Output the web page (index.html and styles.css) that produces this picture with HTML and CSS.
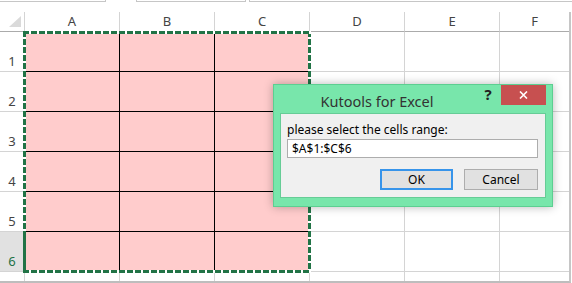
FILE: index.html
```html
<!DOCTYPE html>
<html>
<head>
<meta charset="utf-8">
<title>Kutools for Excel</title>
<link rel="stylesheet" href="styles.css">
</head>
<body>
<div class="app">
  <div class="toolbar">
    <div class="tb-box tb-name"></div>
    <div class="tb-box tb-fx"></div>
    <div class="tb-box tb-formula"></div>
  </div>
  <div class="sheet">
    <div class="corner"><span class="tri"></span></div>
    <div class="ch">A</div><div class="ch">B</div><div class="ch">C</div><div class="ch">D</div><div class="ch">E</div><div class="ch last">F</div>

    <div class="rh">1</div><div class="c sel"></div><div class="c sel"></div><div class="c sel"></div><div class="c"></div><div class="c"></div><div class="c last"></div>
    <div class="rh">2</div><div class="c sel"></div><div class="c sel"></div><div class="c sel"></div><div class="c"></div><div class="c"></div><div class="c last"></div>
    <div class="rh">3</div><div class="c sel"></div><div class="c sel"></div><div class="c sel"></div><div class="c"></div><div class="c"></div><div class="c last"></div>
    <div class="rh">4</div><div class="c sel"></div><div class="c sel"></div><div class="c sel"></div><div class="c"></div><div class="c"></div><div class="c last"></div>
    <div class="rh">5</div><div class="c sel"></div><div class="c sel"></div><div class="c sel"></div><div class="c"></div><div class="c"></div><div class="c last"></div>
    <div class="rh active">6</div><div class="c sel"></div><div class="c sel"></div><div class="c sel"></div><div class="c"></div><div class="c"></div><div class="c last"></div>
    <div class="rh end"></div><div class="c end"></div><div class="c end"></div><div class="c end"></div><div class="c end"></div><div class="c end"></div><div class="c end last"></div>
  </div>

  <div class="marquee"></div>

  <div class="dialog">
    <div class="titlebar">
      <div class="title">Kutools for Excel</div>
      <div class="help">?</div>
      <div class="close">
        <svg width="9" height="8" viewBox="0 0 9 8"><path d="M1 0.5 L8 7.5 M8 0.5 L1 7.5" stroke="#fff" stroke-width="1.6" fill="none"/></svg>
      </div>
    </div>
    <div class="client">
      <div class="label">please select the cells range:</div>
      <div class="input">$A$1:$C$6</div>
      <div class="buttons">
        <div class="btn ok">OK</div>
        <div class="btn cancel">Cancel</div>
      </div>
    </div>
  </div>
</div>
</body>
</html>
```
FILE: styles.css
```css
* { box-sizing: border-box; }
html, body { margin: 0; padding: 0; background: #fff; }
body { font-family: "Noto Sans", "Liberation Sans", sans-serif; }

.app {
  position: relative;
  width: 572px;
  height: 283px;
  overflow: hidden;
  background: #fff;
}

/* remnants of the formula bar */
.toolbar {
  height: 12px;
  display: flex;
  align-items: flex-start;
}
.tb-box {
  height: 2px;
  border-bottom: 1px solid #c6c6c6;
}
.tb-name { width: 106px; border-right: 1px solid #c6c6c6; }
.tb-fx { width: 110px; margin-left: 30px; border-left: 1px solid #c6c6c6; border-right: 1px solid #c6c6c6; }
.tb-formula { flex: 1; margin-left: 3px; border-left: 1px solid #c6c6c6; }

/* grid */
.sheet {
  width: max-content;
  display: grid;
  grid-template-columns: 25px 95px 95px 95px 95px 95px 69px;
  grid-template-rows: 20px repeat(6, 40px) 9px;
  border-right: 2px solid #c6c6c6;
  border-bottom: 2px solid #bdbdbd;
  color: #444;
  font-size: 13px;
}
.corner {
  border-right: 1px solid #d4d4d4;
  border-bottom: 1px solid #ababab;
  display: flex;
  justify-content: flex-end;
  align-items: flex-end;
  padding: 0 3px 4px 0;
}
.tri {
  width: 0;
  height: 0;
  border-left: 12px solid transparent;
  border-bottom: 11px solid #dadada;
}
.ch {
  border-right: 1px solid #d4d4d4;
  border-bottom: 1px solid #ababab;
  text-align: center;
  line-height: 19px;
}
.ch.last { border-right: none; }

.rh {
  border-right: 1px solid #d4d4d4;
  border-bottom: 1px solid #d4d4d4;
  display: flex;
  justify-content: center;
  align-items: flex-end;
  line-height: 17px;
  padding-bottom: 1px;
}
.rh.active {
  background: #e1e1e1;
  color: #217346;
}
.c {
  border-right: 1px solid #d4d4d4;
  border-bottom: 1px solid #d4d4d4;
}
.c.last { border-right: none; }
.c.sel {
  background: #ffcccc;
  border-right-color: #000;
  border-bottom-color: #000;
}
.rh.end, .c.end { border-bottom: none; }

/* copy marquee around A1:C6 */
.marquee {
  position: absolute;
  left: 23px;
  top: 31px;
  width: 288px;
  height: 242px;
  background:
    linear-gradient(#217346, #217346) left bottom / 3px 42px no-repeat,
    repeating-linear-gradient(90deg, #217346 0 6px, #fff 6px 8px) left top / 100% 3px no-repeat,
    repeating-linear-gradient(90deg, #217346 0 6px, #fff 6px 8px) left bottom / 100% 3px no-repeat,
    repeating-linear-gradient(180deg, #217346 0 6px, #fff 6px 8px) left top / 3px 100% no-repeat,
    repeating-linear-gradient(180deg, #217346 0 6px, #fff 6px 8px) right top / 3px 100% no-repeat;
}

/* dialog */
.dialog {
  position: absolute;
  left: 273px;
  top: 84px;
  width: 280px;
  height: 123px;
  background: #78e6ab;
  border: 1px solid #5ccf91;
  box-shadow: 0 0 9px rgba(0, 0, 0, 0.28);
  padding: 0 6px 8px 6px;
  display: flex;
  flex-direction: column;
}
.titlebar {
  height: 28px;
  display: flex;
  align-items: flex-start;
  margin: 0 -6px 0 -6px;
}
.title {
  flex: 1;
  text-align: center;
  font-size: 14.5px;
  line-height: 20px;
  padding-top: 6px;
  color: #333;
}
.help {
  width: 16px;
  text-align: center;
  font-size: 15px;
  font-weight: bold;
  line-height: 18px;
  color: #222;
  margin-right: 5px;
}
.close {
  width: 45px;
  height: 20px;
  background: #c75050;
  margin-right: 6px;
  display: flex;
  align-items: center;
  justify-content: center;
}
.close svg { display: block; }

.client {
  height: 85px;
  background: #f0f0f0;
  border: 1px solid #66cc96;
  padding: 8px 7px 7px 6px;
  font-size: 12px;
  color: #000;
}
.label {
  line-height: 16px;
}
.input {
  margin-top: 1px;
  height: 19px;
  background: #fff;
  border: 1px solid #adadad;
  padding-left: 4px;
  line-height: 17px;
}
.buttons {
  margin-top: 11px;
  display: flex;
  justify-content: flex-end;
  gap: 11px;
}
.btn {
  height: 21px;
  background: #e1e1e1;
  text-align: center;
  line-height: 17px;
}
.btn.ok {
  width: 73px;
  border: 2px solid #3794ea;
}
.btn.cancel {
  width: 74px;
  border: 1px solid #adadad;
  line-height: 19px;
}
```
